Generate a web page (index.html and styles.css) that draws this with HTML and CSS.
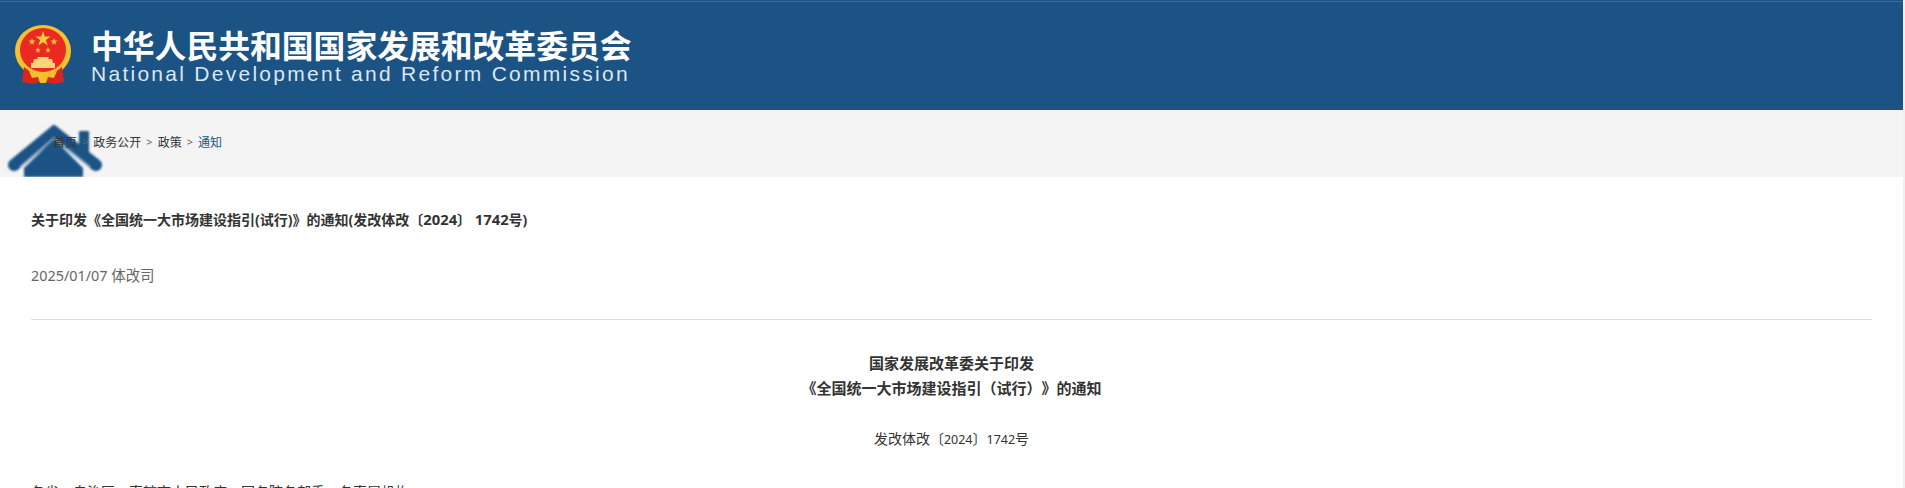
FILE: index.html
```html
<!DOCTYPE html>
<html lang="zh-CN">
<head>
<meta charset="UTF-8">
<meta name="viewport" content="width=device-width, initial-scale=1.0">
<title>关于印发《全国统一大市场建设指引(试行)》的通知</title>
<link rel="stylesheet" href="styles.css">
</head>
<body>
<header class="top">
    <svg class="emblem" viewBox="0 0 56 60" aria-hidden="true">
        <ellipse cx="28" cy="26" rx="28" ry="26" fill="#f6c12f"/>
        <ellipse cx="28" cy="25" rx="23" ry="22" fill="#ea2a22"/>
        <polygon points="28,6 29.8,11.6 35.7,11.6 30.9,15 32.7,20.6 28,17.2 23.3,20.6 25.1,15 20.3,11.6 26.2,11.6" fill="#f8c93a"/>
        <polygon points="17,13 17.9,15.6 20.6,15.6 18.4,17.2 19.2,19.8 17,18.2 14.8,19.8 15.6,17.2 13.4,15.6 16.1,15.6" fill="#f3c23a"/>
        <polygon points="39,13 39.9,15.6 42.6,15.6 40.4,17.2 41.2,19.8 39,18.2 36.8,19.8 37.6,17.2 35.4,15.6 38.1,15.6" fill="#f3c23a"/>
        <polygon points="23,22 23.8,24.2 26,24.2 24.2,25.6 24.9,27.8 23,26.4 21.1,27.8 21.8,25.6 20,24.2 22.2,24.2" fill="#f3c23a"/>
        <polygon points="33,22 33.8,24.2 36,24.2 34.2,25.6 34.9,27.8 33,26.4 31.1,27.8 31.8,25.6 30,24.2 32.2,24.2" fill="#f3c23a"/>
        <path d="M22 32 H34 L33 34 H37 L38 38 H40 V43 H16 V38 H18 L19 34 H23 Z" fill="#f9d577"/>
        <path d="M9 42 Q18 50 28 50 Q38 50 47 42 L49 57 L38 59 L28 56 L18 59 L7 57 Z" fill="#dc241f"/>
        <path d="M14 46 Q22 50 28 48 Q34 50 42 46 L39 53 L33 52 L31 58 H25 L23 52 L17 53 Z" fill="#f5bf2c"/>
    </svg>
    <div class="brand">
        <div class="brand-cn">中华人民共和国国家发展和改革委员会</div>
        <div class="brand-en">National Development and Reform Commission</div>
    </div>
</header>

<nav class="crumbs">
    <svg class="home" viewBox="0 0 96 52" aria-hidden="true">
        <path d="M17 43 L47 14 L76 43 V60 H17 Z" fill="#1c5385"/>
        <rect x="72" y="6" width="10" height="22" rx="1" fill="#1c5385"/>
        <path d="M7 40 L47 7 L89 40" fill="none" stroke="#1c5385" stroke-width="12" stroke-linecap="round" stroke-linejoin="miter"/>
        <path d="M13 42 L47 13 L83 42" fill="none" stroke="#a9c0d6" stroke-width="1.4"/>
    </svg>
    <a class="crumb">首页</a><span class="sep">&gt;</span>
    <a class="crumb">政务公开</a><span class="sep">&gt;</span>
    <a class="crumb">政策</a><span class="sep">&gt;</span>
    <a class="crumb now">通知</a>
</nav>

<main class="article">
    <h1 class="title">关于印发《全国统一大市场建设指引(试行)》的通知(发改体改〔<span class="big">2024</span>〕 <span class="big">1742</span>号)</h1>
    <p class="meta">2025/01/07 体改司</p>
    <div class="content">
        <h2 class="doc-head">国家发展改革委关于印发<br>《全国统一大市场建设指引（试行）》的通知</h2>
        <p class="doc-no">发改体改〔<span class="num">2024</span>〕<span class="num">1742</span>号</p>
        <p class="doc-to">各省、自治区、直辖市人民政府，国务院各部委、各直属机构：</p>
    </div>
</main>
</body>
</html>
```

FILE: styles.css
```css
html, body {
    height: 100%;
    overflow: hidden;
}
body {
    margin: 0;
    font-family: "Noto Sans", "Noto Sans CJK SC", sans-serif;
    color: #333;
    background-color: #fff;
    border-right: 2px solid #f1f1f1;
    box-sizing: border-box;
    text-spacing-trim: space-all;
}
.top {
    display: flex;
    align-items: flex-start;
    height: 110px;
    box-sizing: border-box;
    padding: 25px 0 0 15px;
    background: linear-gradient(#1c5385 1px, #3a6c9b 1px, #3a6c9b 2px, #1c5385 2px);
}
.emblem {
    width: 56px;
    height: 60px;
    flex: none;
}
.brand {
    margin: 3px 0 0 20px;
    color: #fff;
}
.brand-cn {
    font-size: 31.8px;
    font-weight: 700;
    line-height: 36px;
    white-space: nowrap;
}
.brand-en {
    font-family: "Liberation Sans", sans-serif;
    font-size: 21px;
    line-height: 20px;
    letter-spacing: 2.27px;
    color: #dde6ef;
    white-space: nowrap;
}

.crumbs {
    position: relative;
    display: flex;
    align-items: center;
    gap: 5px;
    height: 67px;
    padding: 0 0 4px 53px;
    box-sizing: border-box;
    overflow: hidden;
    font-size: 12px;
    background-color: #f4f4f4;
}
.home {
    position: absolute;
    left: 7px;
    top: 15px;
    width: 96px;
    height: 52px;
    filter: blur(0.8px);
}
.crumb {
    position: relative;
    color: #333;
}
.crumb.now {
    color: #1c5385;
}
.sep {
    position: relative;
    color: #666;
    font-size: 11px;
}

.article {
    padding: 0 31px;
}
.title {
    margin: 0;
    padding-top: 33px;
    font-size: 14px;
    font-weight: 700;
    line-height: 20px;
}
.big {
    font-size: 14.8px;
    line-height: 1;
}
.meta {
    margin: 36px 0 0;
    padding-bottom: 33px;
    font-size: 14.4px;
    line-height: 20px;
    color: #666;
    border-bottom: 1px solid #ddd;
}
.content {
    font-size: 14px;
}
.doc-head {
    margin: 31px 0 0;
    font-size: 15px;
    font-weight: 700;
    line-height: 25px;
    text-align: center;
}
.doc-no {
    margin: 25px 0 0;
    line-height: 26px;
    text-align: center;
}
.num {
    font-size: 12.5px;
}
.doc-to {
    margin: 26px 0 0;
    line-height: 26px;
}
```
